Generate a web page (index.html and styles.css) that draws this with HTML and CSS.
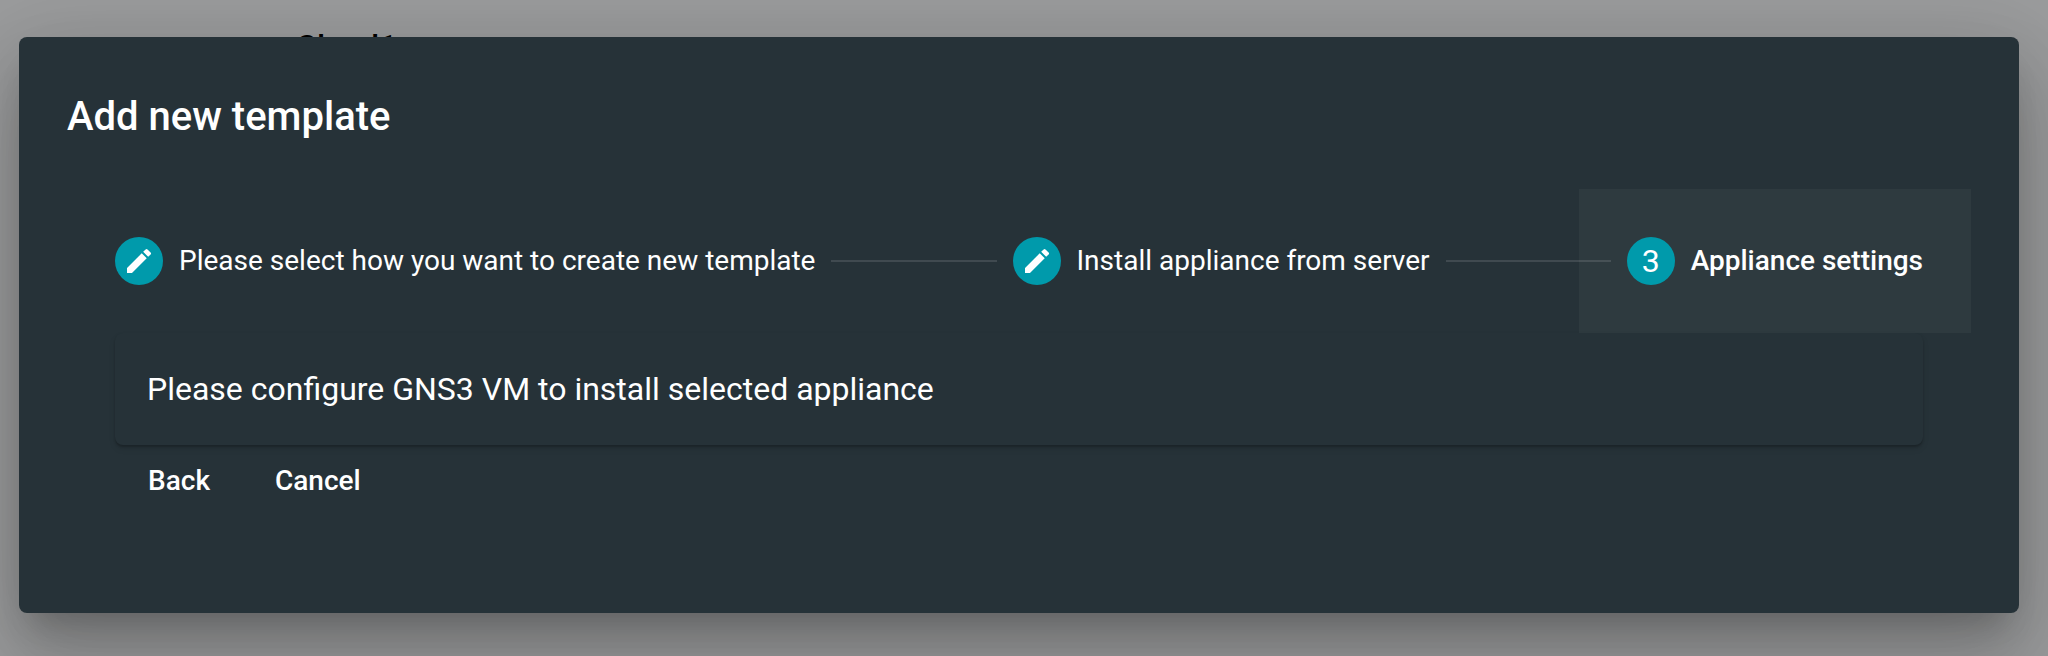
FILE: index.html
```html
<!DOCTYPE html>
<html lang="en">
<head>
<meta charset="utf-8">
<title>Add new template</title>
<link rel="stylesheet" href="styles.css">
</head>
<body>
<div class="backdrop">
  <div class="behind">Cloud1</div>
  <div class="dialog">
    <h1 class="title">Add new template</h1>
    <div class="stepper">
      <div class="step">
        <span class="badge"><svg class="pen" viewBox="0 0 24 24"><path d="M3 17.25V21h3.75L17.81 9.94l-3.75-3.75L3 17.25zM20.71 7.04a1 1 0 0 0 0-1.41l-2.34-2.34a1 1 0 0 0-1.41 0l-1.83 1.83 3.75 3.75 1.83-1.83z"/></svg></span>
        <span class="label">Please select how you want to create new template</span>
      </div>
      <div class="line"></div>
      <div class="step">
        <span class="badge"><svg class="pen" viewBox="0 0 24 24"><path d="M3 17.25V21h3.75L17.81 9.94l-3.75-3.75L3 17.25zM20.71 7.04a1 1 0 0 0 0-1.41l-2.34-2.34a1 1 0 0 0-1.41 0l-1.83 1.83 3.75 3.75 1.83-1.83z"/></svg></span>
        <span class="label">Install appliance from server</span>
      </div>
      <div class="line"></div>
      <div class="step active">
        <span class="badge badge-num">3</span>
        <span class="label">Appliance settings</span>
      </div>
    </div>
    <div class="card">Please configure GNS3 VM to install selected appliance</div>
    <div class="actions">
      <button class="btn">Back</button>
      <button class="btn">Cancel</button>
    </div>
  </div>
</div>
</body>
</html>
```
FILE: styles.css
```css
* { box-sizing: border-box; }
html, body { margin: 0; height: 100%; }
body { font-family: Roboto, "Liberation Sans", sans-serif; background: #9b9c9d; overflow: hidden; }
.backdrop { position: relative; height: 656px; padding: 37px 29px 0 19px; }
.behind { position: absolute; left: 296px; top: 30px; font-size: 32px; font-weight: 500; color: #000; line-height: 32px; }
.dialog {
  position: relative;
  width: 2000px; height: 576px;
  padding: 48px;
  background: #263238;
  border-radius: 8px;
  color: #fff;
  box-shadow: 0 22px 30px -14px rgba(0,0,0,.2), 0 48px 76px 6px rgba(0,0,0,.14), 0 18px 92px 16px rgba(0,0,0,.12);
}
.title { margin: 0 0 40px; font-size: 40px; line-height: 64px; font-weight: 500; height: 64px; }
.stepper { display: flex; align-items: center; height: 144px; }
.step { display: flex; align-items: center; height: 144px; padding: 0 48px; flex: none; }
.badge { width: 48px; height: 48px; border-radius: 50%; background: #009aab; display: flex; align-items: center; justify-content: center; margin-right: 16px; flex: none; }
.badge-num { font-size: 32px; font-weight: 400; }
.pen { width: 32px; height: 32px; fill: #fff; }
.label { font-size: 28px; line-height: 1; white-space: nowrap; }
.active { background: rgba(255,255,255,.04); }
.active .label { font-weight: 500; }
.line { flex: 1; height: 2px; margin: 0 -32px; background: rgba(255,255,255,.12); }
.card { margin: 0 48px; height: 112px; padding: 0 32px; display: flex; align-items: center; font-size: 32px; border-radius: 8px; background: #263238; box-shadow: 0 2px 2px rgba(0,0,0,.2), 0 4px 6px rgba(0,0,0,.1); }
.actions { display: flex; margin: 0 48px; }
.btn { font: 500 28px/72px Roboto, sans-serif; color: #fff; background: none; border: 0; padding: 0 32px; }
.btn:first-child { padding: 0 33px; }
```
